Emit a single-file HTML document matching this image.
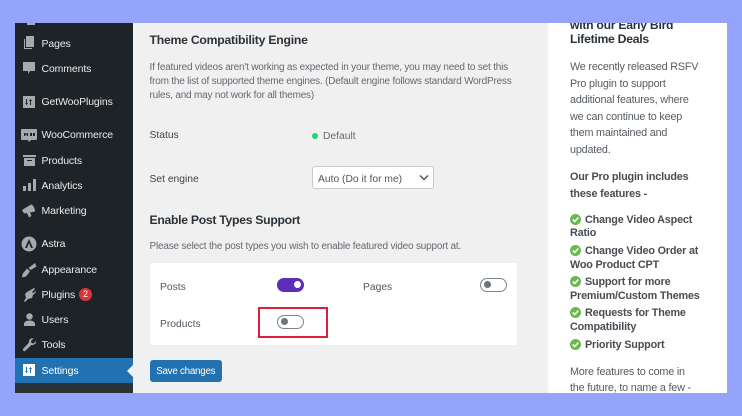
<!DOCTYPE html>
<html><head><meta charset="utf-8"><style>
html,body{margin:0;padding:0;width:742px;height:416px;overflow:hidden;background:#93a4fa}
body{position:relative;font-family:"Liberation Sans",sans-serif}
#win{position:absolute;left:15px;top:23px;width:712px;height:370px;background:#f0f0f1;overflow:hidden;filter:blur(.3px)}
#side{position:absolute;left:0;top:0;width:118px;height:370px;background:#1d2327}
#sel{position:absolute;left:0;top:335px;width:118px;height:25px;background:#2271b1}
#foot{position:absolute;left:0;top:360px;width:118px;height:10px;background:#2c3338}
#arrow{position:absolute;left:112px;top:342px;border:6px solid transparent;border-left:0;border-right:6px solid #f0f0f1}
#panel{position:absolute;left:533px;top:0;width:179px;height:370px;background:#fff}
.t{position:absolute;white-space:nowrap;line-height:16px}
.m{font-size:10.5px;letter-spacing:-.12px;color:#eaeaeb;left:26.5px}
.c{font-size:10.3px;color:#50575e}
.p{font-size:10px;letter-spacing:-.2px;color:#646970}
.h{font-size:12.2px;letter-spacing:-.22px;font-weight:bold;color:#2c3338}
.b{font-size:10.8px;letter-spacing:-.19px;color:#555c62}
.bb{font-size:10.8px;letter-spacing:-.17px;font-weight:bold;color:#474d52}
svg.i{position:absolute;left:6px;width:16px;height:16px;fill:#a7aaad}
.card{position:absolute;left:135px;top:240px;width:367px;height:82px;background:#fff;border-radius:2px}
.tg{position:absolute;width:24.6px;height:12px;border:1.2px solid #7d858c;border-radius:8px;background:#fff}
.tg:after{content:"";position:absolute;left:3px;top:2.4px;width:7px;height:7px;border-radius:50%;background:#6d757c}
.on{background:#5b2fb8;border-color:#5b2fb8}
.on:after{left:15.5px;background:#fff}
.ck{position:absolute;left:555px;width:11px;height:11px;border-radius:50%;background:#6ab84f}
.ck svg{position:absolute;left:0;top:0;width:11px;height:11px}
</style></head><body>
<div id="win">
<div id="side">
<div id="sel"></div><div id="foot"></div><div id="arrow"></div>
<div style="position:absolute;left:12px;top:0;width:8px;height:1.5px;background:#a7aaad"></div>

<svg class="i" style="top:12px" viewBox="0 0 16 16"><path d="M5 1h8v11H5z"/><path d="M3 4h1v9h7v1H3z"/></svg>
<div class="t m" style="top:13px">Pages</div>
<svg class="i" style="top:37px" viewBox="0 0 16 16"><path d="M2 2h12v9H9l-2 3v-3H2z"/></svg>
<div class="t m" style="top:38px">Comments</div>
<svg class="i" style="top:71px" viewBox="0 0 16 16"><path fill-rule="evenodd" d="M2 2h12v12H2zM5 5v4H4l1.500 2L7 9H6V5zM10 11V7h1L9.500 5 8 7h1v4z"/></svg>
<div class="t m" style="top:71px">GetWooPlugins</div>
<svg class="i" style="top:104px;left:5px;width:18px" viewBox="0 0 18 16"><path fill-rule="evenodd" d="M2 2h14a1 1 0 0 1 1 1v9a1 1 0 0 1-1 1h-5l-2 2-1-2H2a1 1 0 0 1-1-1V3a1 1 0 0 1 1-1zM4 6v3h1l1-2 1 2h1V6H7v1L6 6 5 7V6zM10 6v3h2V6zM13 6v3h2V6z"/></svg>
<div class="t m" style="top:104px">WooCommerce</div>
<svg class="i" style="top:129px" viewBox="0 0 16 16"><path fill-rule="evenodd" d="M2 3h13v2H2zM3 6h11v8H3zM6 8v1h5V8z"/></svg>
<div class="t m" style="top:130px">Products</div>
<svg class="i" style="top:154px" viewBox="0 0 16 16"><path d="M2 9h3v5H2zM7 6h3v8H7zM12 2h3v12h-3z"/></svg>
<div class="t m" style="top:155px">Analytics</div>
<svg class="i" style="top:180px" viewBox="0 0 16 16"><path d="M1 7l9-5.500c2 0 4 4 4 7l-5 1 1.500 3.500-2.500 1.500-2-4.500-3 .5z"/></svg>
<div class="t m" style="top:180px">Marketing</div>
<svg class="i" style="top:213px" viewBox="0 0 16 16"><path fill-rule="evenodd" d="M8 .5a7.500 7.500 0 1 1 0 15 7.500 7.500 0 0 1 0-15zM8 3L4 12h2l2-5 2 5h2z"/></svg>
<div class="t m" style="top:213px">Astra</div>
<svg class="i" style="top:239px" viewBox="0 0 16 16"><path d="M14 1l1.500 3.500-6 3.500-2-2zM6 6.500l3 3-4 5-4 1 .5-3.500z"/></svg>
<div class="t m" style="top:239px">Appearance</div>
<svg class="i" style="top:264px" viewBox="0 0 16 16"><path d="M13 1l1 1-3 3 1 1 3-2 0 1-3 3-1 3-4 1-3 3-1-1 2-3-1-4 2-2z"/></svg>
<div class="t m" style="top:264px">Plugins</div>
<div style="position:absolute;left:64px;top:265px;width:13px;height:13px;border-radius:50%;background:#d63638;color:#fff;font-size:9px;line-height:13px;text-align:center">2</div>
<svg class="i" style="top:289px" viewBox="0 0 16 16"><circle cx="8.500" cy="4.500" r="3.200"/><path d="M3 14v-2c0-2 2-3.500 5.500-3.500S14 10 14 12v2z"/></svg>
<div class="t m" style="top:289px">Users</div>
<svg class="i" style="top:314px" viewBox="0 0 16 16"><path d="M15 4l-2.500 2.500L10.500 6 10 4l2.500-2.500C10 .5 7.500 2.500 8 5.500L2 12a1.500 1.500 0 0 0 2 2l6.500-6c3 .5 5-2 4.500-4z"/></svg>
<div class="t m" style="top:314px">Tools</div>
<svg class="i" style="top:339px;fill:#fff" viewBox="0 0 16 16"><path fill-rule="evenodd" d="M2 2h12v12H2zM5 5v4H4l1.500 2L7 9H6V5zM10 11V7h1L9.500 5 8 7h1v4z"/></svg>
<div class="t m" style="top:340px;color:#fff">Settings</div>
</div>

<div class="t h" style="left:134.500px;top:9px">Theme Compatibility Engine</div>
<div class="t p" style="left:134.500px;top:37px">If featured videos aren't working as expected in your theme, you may need to set this</div>
<div class="t p" style="left:134.500px;top:51px">from the list of supported theme engines. (Default engine follows standard WordPress</div>
<div class="t p" style="left:134.500px;top:65px">rules, and may not work for all themes)</div>

<div class="t c" style="left:134.500px;top:105px;color:#3c434a">Status</div>
<div style="position:absolute;left:297px;top:110px;width:6px;height:6px;border-radius:50%;background:#1ed37f"></div>
<div class="t c" style="left:308px;top:106px;color:#646970">Default</div>

<div class="t c" style="left:134.500px;top:149px;color:#3c434a">Set engine</div>
<div style="position:absolute;left:297px;top:143px;width:120px;height:21px;background:#fff;border:1px solid #c8cacd;border-radius:3px"></div>
<div class="t c" style="left:303px;top:149px;color:#50575e">Auto (Do it for me)</div>
<svg style="position:absolute;left:404px;top:151px;width:10px;height:7px" viewBox="0 0 10 7"><path d="M1 1.500l4 4 4-4" fill="none" stroke="#50575e" stroke-width="1.500"/></svg>

<div class="t h" style="left:134.500px;top:189px;letter-spacing:-.28px">Enable Post Types Support</div>
<div class="t p" style="left:134.500px;top:216px">Please select the post types you wish to enable featured video support at.</div>

<div class="card"></div>
<div class="t c" style="left:145px;top:257px">Posts</div>
<div class="tg on" style="left:262px;top:255px"></div>
<div class="t c" style="left:348px;top:257px">Pages</div>
<div class="tg" style="left:465px;top:255px"></div>
<div class="t c" style="left:145px;top:294px">Products</div>
<div class="tg" style="left:262px;top:292px"></div>
<div style="position:absolute;left:243.300px;top:284.300px;width:66px;height:27px;border:2px solid #dc1e3c"></div>

<div style="position:absolute;left:134.500px;top:337px;width:72.500px;height:22px;background:#2271b1;border-radius:3px;color:#fff;font-size:9.800px;letter-spacing:-.25px;line-height:23px;text-align:center">Save changes</div>

<div id="panel"></div>
<div class="t h" style="left:555px;top:-5px;line-height:14px;letter-spacing:-.27px">with our Early Bird</div>
<div class="t h" style="left:555px;top:8px;letter-spacing:-.27px">Lifetime Deals</div>
<div class="t b" style="left:555px;top:36px">We recently released RSFV</div>
<div class="t b" style="left:555px;top:53px">Pro plugin to support</div>
<div class="t b" style="left:555px;top:69px">additional features, where</div>
<div class="t b" style="left:555px;top:86px">we can continue to keep</div>
<div class="t b" style="left:555px;top:102px">them maintained and</div>
<div class="t b" style="left:555px;top:119px">updated.</div>
<div class="t bb" style="left:555px;top:146px">Our Pro plugin includes</div>
<div class="t bb" style="left:555px;top:163px">these features -</div>

<div class="ck" style="top:191px"><svg viewBox="0 0 11 11"><path d="M2.800 5.500l2 2 3.500-4" fill="none" stroke="#fff" stroke-width="1.600"/></svg></div>
<div class="t bb" style="left:570px;top:189px">Change Video Aspect</div>
<div class="t bb" style="left:555px;top:202px">Ratio</div>
<div class="ck" style="top:222px"><svg viewBox="0 0 11 11"><path d="M2.800 5.500l2 2 3.500-4" fill="none" stroke="#fff" stroke-width="1.600"/></svg></div>
<div class="t bb" style="left:570px;top:220px">Change Video Order at</div>
<div class="t bb" style="left:555px;top:234px">Woo Product CPT</div>
<div class="ck" style="top:253px"><svg viewBox="0 0 11 11"><path d="M2.800 5.500l2 2 3.500-4" fill="none" stroke="#fff" stroke-width="1.600"/></svg></div>
<div class="t bb" style="left:570px;top:251px">Support for more</div>
<div class="t bb" style="left:555px;top:265px">Premium/Custom Themes</div>
<div class="ck" style="top:284px"><svg viewBox="0 0 11 11"><path d="M2.800 5.500l2 2 3.500-4" fill="none" stroke="#fff" stroke-width="1.600"/></svg></div>
<div class="t bb" style="left:570px;top:282px">Requests for Theme</div>
<div class="t bb" style="left:555px;top:296px">Compatibility</div>
<div class="ck" style="top:316px"><svg viewBox="0 0 11 11"><path d="M2.800 5.500l2 2 3.500-4" fill="none" stroke="#fff" stroke-width="1.600"/></svg></div>
<div class="t bb" style="left:570px;top:314px">Priority Support</div>
<div class="t b" style="left:555px;top:341px">More features to come in</div>
<div class="t b" style="left:555px;top:357px">the future, to name a few -</div>
</div>
</body></html>
